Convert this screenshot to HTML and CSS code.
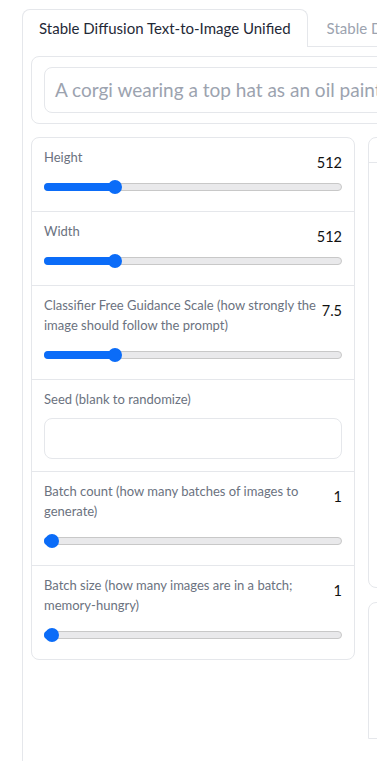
FILE: index.html
```html
<!DOCTYPE html>
<html>
<head>
<meta charset="utf-8">
<link rel="stylesheet" href="styles.css">
</head>
<body>
<div class="page">
  <div class="tabnav">
    <div class="tab active">Stable Diffusion Text-to-Image Unified</div>
    <div class="tab-rest"><span class="tab">Stable D</span></div>
  </div>
  <div class="panel">
    <div class="prompt-box">
      <div class="prompt-input">A corgi wearing a top hat as an oil paint</div>
    </div>
    <div class="columns">
      <div class="left">
        <div class="row">
          <div class="head"><div class="label">Height</div><div class="value">512</div></div>
          <div class="slider"><div class="track"></div><div class="fill" style="width:71px"></div><div class="thumb" style="left:64px"></div></div>
        </div>
        <div class="row">
          <div class="head"><div class="label">Width</div><div class="value">512</div></div>
          <div class="slider"><div class="track"></div><div class="fill" style="width:71px"></div><div class="thumb" style="left:64px"></div></div>
        </div>
        <div class="row">
          <div class="head"><div class="label">Classifier Free Guidance Scale (how strongly the<br>image should follow the prompt)</div><div class="value">7.5</div></div>
          <div class="slider"><div class="track"></div><div class="fill" style="width:71px"></div><div class="thumb" style="left:64px"></div></div>
        </div>
        <div class="row">
          <div class="head"><div class="label">Seed (blank to randomize)</div></div>
          <div class="text-input"></div>
        </div>
        <div class="row">
          <div class="head"><div class="label">Batch count (how many batches of images to<br>generate)</div><div class="value">1</div></div>
          <div class="slider"><div class="track"></div><div class="fill" style="width:8px"></div><div class="thumb" style="left:1px"></div></div>
        </div>
        <div class="row">
          <div class="head"><div class="label">Batch size (how many images are in a batch;<br>memory-hungry)</div><div class="value">1</div></div>
          <div class="slider"><div class="track"></div><div class="fill" style="width:8px"></div><div class="thumb" style="left:1px"></div></div>
        </div>
      </div>
      <div class="right">
        <div class="gallery"><div class="gallery-head"></div></div>
        <div class="output"></div>
      </div>
    </div>
  </div>
</div>
</body>
</html>
```
FILE: styles.css
```css
html, body {
  margin: 0;
  padding: 0;
  overflow: hidden;
  background: #fff;
}
body {
  font-family: "Lato", "Noto Sans", sans-serif;
  color: #1f2937;
}
.page {
  width: 1000px;
  padding: 9px 0 0 22px;
}
.tabnav {
  display: flex;
  align-items: flex-end;
}
.tab {
  font-size: 15px;
  line-height: 20px;
  white-space: nowrap;
}
.tab.active {
  border: 1px solid #e5e7eb;
  border-bottom: none;
  border-radius: 8px 8px 0 0;
  padding: 8px 16px 9px 16px;
  color: #1f2937;
  background: #fff;
}
.tab-rest {
  flex: 1;
  border-bottom: 1px solid #e5e7eb;
  padding: 8px 0 8px 19px;
}
.tab-rest .tab {
  color: #9ca3af;
}
.panel {
  border-left: 1px solid #e5e7eb;
  padding: 9px 0 0 8px;
  min-height: 720px;
}
.prompt-box {
  border: 1px solid #e5e7eb;
  border-radius: 8px;
  padding: 10px 12px;
}
.prompt-input {
  border: 1px solid #e5e7eb;
  border-radius: 8px;
  height: 44px;
  line-height: 44px;
  padding: 0 10px;
  font-size: 19px;
  color: #9ca3af;
  white-space: nowrap;
}
.columns {
  display: flex;
  gap: 13px;
  margin-top: 13px;
  align-items: flex-start;
}
.left {
  width: 322px;
  border: 1px solid #e5e7eb;
  border-radius: 8px;
}
.row {
  padding: 9px 12px 12px;
  border-top: 1px solid #e5e7eb;
}
.row:first-child {
  border-top: none;
}
.head {
  display: flex;
  justify-content: space-between;
  align-items: flex-start;
  gap: 4px;
}
.label {
  font-size: 13px;
  line-height: 20px;
  color: #6b7280;
  padding-bottom: 8px;
  white-space: nowrap;
}
.value {
  box-sizing: border-box;
  font-size: 14.5px;
  line-height: 24px;
  height: 28px;
  padding-top: 4px;
  color: #111;
  text-align: right;
  flex: none;
}
.slider {
  position: relative;
  height: 24px;
}
.track {
  position: absolute;
  left: 0;
  right: 0;
  top: 8px;
  height: 6px;
  border: 1px solid #c8c8c8;
  border-radius: 4px;
  background: #e9e9eb;
}
.fill {
  position: absolute;
  left: 0;
  top: 8px;
  height: 8px;
  border-radius: 4px;
  background: #0b6cf8;
}
.thumb {
  position: absolute;
  top: 5px;
  width: 14px;
  height: 14px;
  border-radius: 50%;
  background: #0b6cf8;
}
.text-input {
  margin-top: 1px;
  height: 39px;
  border: 1px solid #e5e7eb;
  border-radius: 8px;
}
.right {
  flex: 1;
  display: flex;
  flex-direction: column;
  gap: 14px;
}
.gallery {
  height: 449px;
  border: 1px solid #e5e7eb;
  border-radius: 8px;
}
.gallery-head {
  height: 24px;
  border-bottom: 1px solid #e5e7eb;
}
.output {
  height: 135px;
  border: 1px solid #e5e7eb;
  border-radius: 8px 0 0 0;
}
```
